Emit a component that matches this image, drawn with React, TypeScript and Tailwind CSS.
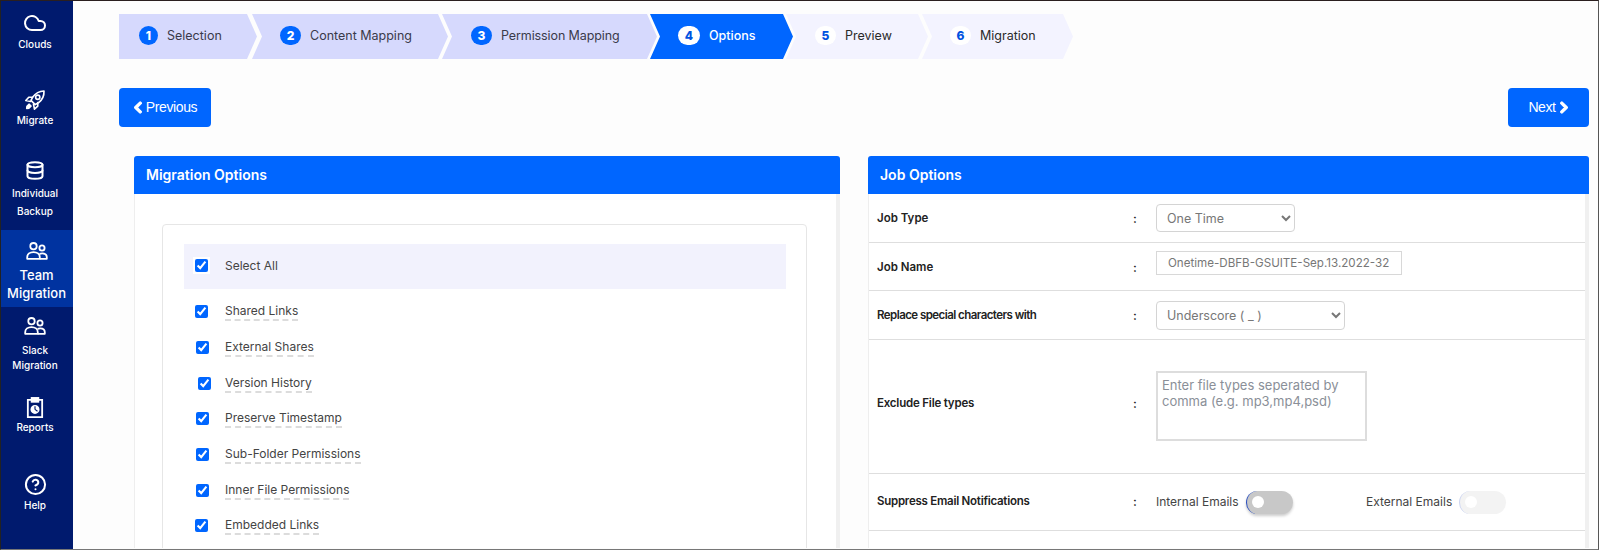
import { Cloud, Database, CircleHelp } from 'lucide-react';
import { FaChevronLeft, FaChevronRight } from 'react-icons/fa';

function RocketIcon() {
  return (
    <svg viewBox="0 0 24 24" className="w-[22px] h-[22px]" fill="none" stroke="currentColor" strokeWidth="1.8" strokeLinejoin="round" strokeLinecap="round">
      <path d="M21.8 2.2c-5.2.3-9.2 2.5-12.2 6.6l-2 3.6 4.6 4.6 3.6-2c4.1-3 6.3-7 6-12.8z" />
      <circle cx="15" cy="9" r="2.3" />
      <path d="M9.2 9H5.2L2 12.6l5.2 1" />
      <path d="M15 14.8v4l-3.6 3.2-1-5.2" />
      <path d="M5.6 16.6c-1.6 1-2.6 3-2.6 4.6 1.6 0 3.6-1 4.6-2.6z" fill="currentColor" />
    </svg>
  );
}

function PeopleIcon() {
  return (
    <svg viewBox="0 0 22 18" className="w-[22px] h-[18px]" fill="none" stroke="currentColor" strokeWidth="1.8" strokeLinejoin="round">
      <circle cx="7.5" cy="4.2" r="3.2" />
      <circle cx="16" cy="6" r="2.6" />
      <path d="M1.2 16.8v-1.6c0-3 2.6-5 6.3-5s6.3 2 6.3 5v1.6z" />
      <path d="M13.8 16.8h7v-1.6c0-2.4-1.8-3.9-4.6-3.9-1 0-1.9.2-2.6.6" />
    </svg>
  );
}

function ReportIcon() {
  return (
    <svg viewBox="0 0 18 22" className="w-[18px] h-[21px]" fill="none" stroke="currentColor" strokeWidth="1.9">
      <path d="M5.5 3H1.5v18h15V3h-4" />
      <rect x="5.5" y="1" width="7" height="4" fill="currentColor" />
      <circle cx="9" cy="13" r="3.8" fill="currentColor" />
      <path d="M9 13V9.6M9 13l2.6 2" stroke="#001a6e" strokeWidth="1.2" />
    </svg>
  );
}

const navItems = [
  { labels: ['Clouds'], icon: <Cloud className="w-[24px] h-[24px]" strokeWidth={2} />, box: 'h-[76px] pt-[10px] pr-[4px]', text: 'leading-[18px]' },
  { labels: ['Migrate'], icon: <RocketIcon />, box: 'h-[75px] pt-[12px] pr-[4px]', text: 'leading-[18px]' },
  { labels: ['Individual', 'Backup'], icon: <Database className="w-[20px] h-[21px]" strokeWidth={2.4} />, box: 'h-[78px] pt-[8px] pr-[4px]', text: 'mt-[3px] leading-[18px]' },
  { labels: ['Team', 'Migration'], icon: <PeopleIcon />, box: 'h-[77px] pt-[12px] pr-[1px] bg-[#0033a0]', text: 'mt-[6px] !text-[13px] leading-[18px]' },
  { labels: ['Slack', 'Migration'], icon: <PeopleIcon />, box: 'h-[76px] pt-[10px] pr-[4px]', text: 'mt-[8px] leading-[15px]' },
  { labels: ['Reports'], icon: <ReportIcon />, box: 'h-[75px] pt-[14px] pr-[4px]', text: 'leading-[18px]' },
  { labels: ['Help'], icon: <CircleHelp className="w-[23px] h-[23px]" strokeWidth={2.1} />, box: 'h-[74px] pt-[15px] pr-[4px]', text: 'leading-[18px]' },
];

const steps = [
  { n: 1, label: 'Selection', box: 'w-[138px] pl-[20px] bg-[#d6d9fd] text-[#3a3a4a] [clip-path:polygon(0_0,calc(100%-10px)_0,100%_50%,calc(100%-10px)_100%,0_100%)]', circle: 'w-[19px] bg-[#0066ff] text-white', gap: 'ml-[9px]' },
  { n: 2, label: 'Content Mapping', box: 'w-[196px] -ml-[5px] pl-[28px] bg-[#d6d9fd] text-[#3a3a4a] [clip-path:polygon(0_0,calc(100%-10px)_0,100%_50%,calc(100%-10px)_100%,0_100%,10px_50%)]', circle: 'w-[21px] bg-[#0066ff] text-white', gap: 'ml-[9px]' },
  { n: 3, label: 'Permission Mapping', box: 'w-[215px] -ml-[6px] pl-[29px] bg-[#d6d9fd] text-[#3a3a4a] [clip-path:polygon(0_0,calc(100%-10px)_0,100%_50%,calc(100%-10px)_100%,0_100%,10px_50%)]', circle: 'w-[21px] bg-[#0066ff] text-white', gap: 'ml-[9px] tracking-[-0.1px]' },
  { n: 4, label: 'Options', box: 'w-[143px] -ml-[7px] pl-[28px] bg-[#0066ff] text-white font-medium [clip-path:polygon(0_0,calc(100%-10px)_0,100%_50%,calc(100%-10px)_100%,0_100%,10px_50%)]', circle: 'w-[22px] bg-white text-[#0052e0]', gap: 'ml-[9px]' },
  { n: 5, label: 'Preview', box: 'w-[142px] -ml-[7px] pl-[29px] bg-[#f3f3ff] text-[#2a2a2a] [clip-path:polygon(0_0,calc(100%-10px)_0,100%_50%,calc(100%-10px)_100%,0_100%,10px_50%)]', circle: 'w-[21px] bg-white text-[#0052e0]', gap: 'ml-[9px]' },
  { n: 6, label: 'Migration', box: 'w-[151px] -ml-[6px] pl-[28px] bg-[#f3f3ff] text-[#2a2a2a] [clip-path:polygon(0_0,calc(100%-10px)_0,100%_50%,calc(100%-10px)_100%,0_100%,10px_50%)]', circle: 'w-[21px] bg-white text-[#0052e0]', gap: 'ml-[9px]' },
];

const options = [
  { label: 'Shared Links', box: 'pl-[11px]' },
  { label: 'External Shares', box: 'pl-[12px]' },
  { label: 'Version History', box: 'pl-[14px]' },
  { label: 'Preserve Timestamp', box: 'pl-[12px]' },
  { label: 'Sub-Folder Permissions', box: 'pl-[12px]' },
  { label: 'Inner File Permissions', box: 'pl-[12px]' },
  { label: 'Embedded Links', box: 'pl-[11px]' },
];

function Row({ label, height, labelClass, children }: { label: string; height: string; labelClass?: string; children: React.ReactNode }) {
  return (
    <div className={`flex items-center border-b border-[#dedede] ${height}`}>
      <div className={`w-[264px] pl-[8px] text-[11.5px] font-semibold text-[#222] ${labelClass ?? ''}`}>{label}</div>
      <div className={`w-[23px] text-[12px] font-semibold text-[#222] ${labelClass ?? ''}`}>:</div>
      <div className="flex items-center">{children}</div>
    </div>
  );
}

export default function App() {
  return (
    <div className="flex w-[1599px] h-[550px] overflow-hidden bg-[#fdfdfd] border-t border-l border-r border-b border-t-[#2a1f1f] border-l-[#222] border-r-[#555] border-b-[#777] font-['Inter',sans-serif]">
      <aside className="w-[72px] shrink-0 bg-[#001a6e] text-white">
        {navItems.map((item) => (
          <div key={item.labels.join()} className={`flex flex-col items-center ${item.box}`}>
            {item.icon}
            <div className={`text-center text-[10px] font-medium ${item.text}`}>
              {item.labels.map((l) => (
                <div key={l}>{l}</div>
              ))}
            </div>
          </div>
        ))}
      </aside>

      <main className="flex-1 min-w-0 pl-[46px] pr-[9px]">
        <div className="flex h-[45px] mt-[13px]">
          {steps.map((s) => (
            <div key={s.n} className={`flex items-center shrink-0 text-[12.5px] ${s.box}`}>
              <span className={`flex items-center justify-center h-[19px] -mt-[2px] rounded-full text-[12px] font-extrabold ${s.circle}`}>{s.n}</span>
              <span className={s.gap}>{s.label}</span>
            </div>
          ))}
        </div>

        <div className="flex justify-between mt-[29px] font-['Liberation_Sans',sans-serif] text-[14px] tracking-[-0.4px] text-white">
          <button className="flex items-center justify-center gap-[3px] w-[92px] h-[39px] rounded-[4px] bg-[#0066ff]">
            <FaChevronLeft className="w-[10px] h-[13px] stroke-current [stroke-width:50]" />
            Previous
          </button>
          <button className="flex items-center justify-center gap-[3px] w-[81px] h-[39px] rounded-[4px] bg-[#0066ff]">
            Next
            <FaChevronRight className="w-[10px] h-[13px] stroke-current [stroke-width:50]" />
          </button>
        </div>

        <div className="flex mt-[29px] h-[392px]">
          <section className="w-[706px] ml-[15px] flex flex-col">
            <h2 className="h-[38px] shrink-0 flex items-center pl-[12px] pb-[2px] bg-[#0066ff] rounded-t-[3px] text-white text-[14px] font-semibold">Migration Options</h2>
            <div className="flex-1 bg-white border-l border-[#eeeeee] border-r-[4px] border-r-[#f0f0f0] pl-[27px] pt-[30px] overflow-hidden">
              <div className="w-[645px] h-[400px] border border-[#e6e6e6] rounded-[4px] pl-[21px] pt-[19px]">
                <div className="flex items-center w-[602px] h-[45px] bg-[#f2f2fd] text-[12px] text-[#444]">
                  <div className="w-[41px] pl-[11px] flex">
                    <input type="checkbox" checked readOnly className="w-[13px] h-[13px] accent-[#0066ff] -mt-[2px] shadow-[0_0_0_2px_white]" />
                  </div>
                  <span className="-mt-[2px]">Select All</span>
                </div>
                <div className="mt-[5px]">
                  {options.map((o) => (
                    <div key={o.label} className="flex items-center h-[35.7px] text-[12px] text-[#444]">
                      <div className={`w-[41px] flex ${o.box}`}>
                        <input type="checkbox" checked readOnly className="w-[13px] h-[13px] accent-[#0066ff]" />
                      </div>
                      <span className="leading-[17px] border-b-2 border-dashed border-[#dcdcdc]">{o.label}</span>
                    </div>
                  ))}
                </div>
              </div>
            </div>
          </section>

          <section className="flex-1 ml-[28px] flex flex-col">
            <h2 className="h-[38px] shrink-0 flex items-center pl-[12px] pb-[2px] bg-[#0066ff] rounded-t-[3px] text-white text-[14px] font-semibold">Job Options</h2>
            <div className="flex-1 bg-white border-l border-[#eeeeee] border-r-[4px] border-r-[#f0f0f0]">
              <Row label="Job Type" height="h-[49px]" labelClass="pt-[2px]">
                <select className="w-[139px] h-[28px] pl-[6px] bg-white border border-[#d4d4d4] rounded-[4px] text-[12.5px] text-[#777]">
                  <option>One Time</option>
                </select>
              </Row>
              <Row label="Job Name" height="h-[48px]" labelClass="pt-[2px]">
                <input readOnly value="Onetime-DBFB-GSUITE-Sep.13.2022-32" className="w-[246px] h-[24px] -mt-[7px] pl-[11px] bg-white border border-[#d8d8d8] text-[11.6px] text-[#777] outline-none" />
              </Row>
              <Row label="Replace special characters with" height="h-[49px]" labelClass="pt-[1px] tracking-[-0.55px]">
                <select className="w-[189px] h-[29px] pl-[6px] bg-white border border-[#d4d4d4] rounded-[4px] text-[12.5px] text-[#777]">
                  <option>Underscore ( _ )</option>
                </select>
              </Row>
              <Row label="Exclude File types" height="h-[134px]" labelClass="-mt-[6px] tracking-[-0.2px]">
                <textarea readOnly placeholder="Enter file types seperated by comma (e.g. mp3,mp4,psd)" className="block w-[211px] h-[70px] -mt-[1px] px-[4px] py-[4px] border-2 border-[#dddddd] text-[13px] leading-[16px] placeholder:text-[#8a8f98] resize-none outline-none" />
              </Row>
              <Row label="Suppress Email Notifications" height="h-[57px]" labelClass="tracking-[-0.25px]">
                <span className="text-[12px] text-[#444] w-[90px]">Internal Emails</span>
                <span className="flex items-center w-[47px] h-[23px] rounded-full bg-[#c8c8c8] border-l border-[#2a4fc0] shadow-[0_2px_3px_rgba(0,0,0,0.2)] pl-[5px]">
                  <span className="w-[12px] h-[12px] rounded-full bg-white" />
                </span>
                <span className="text-[12px] text-[#444] w-[93px] ml-[73px]">External Emails</span>
                <span className="flex items-center w-[47px] h-[23px] rounded-full bg-[#f3f3f3] border-l border-[#ccd4f0] pl-[5px]">
                  <span className="w-[12px] h-[12px] rounded-full bg-white" />
                </span>
              </Row>
            </div>
          </section>
        </div>
      </main>
    </div>
  );
}
